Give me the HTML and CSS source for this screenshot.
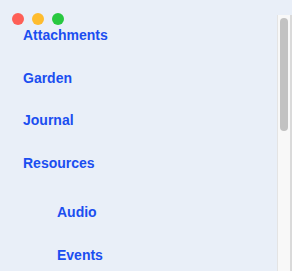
FILE: index.html
```html
<!DOCTYPE html>
<html>
<head>
<meta charset="utf-8">
<link rel="stylesheet" href="styles.css">
</head>
<body>
<div class="window">
  <div class="lights">
    <span class="light red"></span>
    <span class="light yellow"></span>
    <span class="light green"></span>
  </div>
  <div class="pane">
    <nav class="sidebar">
      <ul class="tree">
        <li><a class="item">Attachments</a></li>
        <li><a class="item">Garden</a></li>
        <li><a class="item">Journal</a></li>
        <li><a class="item">Resources</a>
          <ul class="tree sub">
            <li><a class="item">Audio</a></li>
            <li><a class="item">Events</a></li>
          </ul>
        </li>
      </ul>
    </nav>
    <div class="scrollbar">
      <div class="thumb"></div>
    </div>
  </div>
</div>
</body>
</html>
```

FILE: styles.css
```css
html, body {
  margin: 0;
  padding: 0;
  height: 100%;
  overflow: hidden;
}
body {
  background: #e9eff8;
  font-family: "Liberation Sans", Arial, sans-serif;
}
.window {
  position: relative;
  height: 100%;
  display: flex;
  flex-direction: column;
}
.lights {
  position: absolute;
  top: 13px;
  left: 12px;
  display: flex;
  gap: 8px;
  z-index: 2;
}
.light {
  width: 12px;
  height: 12px;
  border-radius: 50%;
  display: block;
}
.red { background: #fe5f57; }
.yellow { background: #febc2e; }
.green { background: #28c840; }
.pane {
  margin-top: 15px;
  flex: 1;
  min-height: 0;
  display: flex;
  border-right: 2px solid #dadada;
}
.sidebar {
  flex: 1;
  min-width: 0;
  overflow: hidden;
}
.scrollbar {
  width: 8px;
  padding: 3px 2px 0 2px;
  background: #f8f8f8;
  border-left: 1px solid #e4e4e4;
}
.thumb {
  height: 113px;
  border-radius: 4px;
  background: #c2c2c2;
}
.tree {
  list-style: none;
  margin: 0;
  padding: 0;
}
.tree.sub {
  margin-top: 6.3px;
  padding-left: 34px;
}
.item {
  display: block;
  padding: 12px 0 14.67px 23px;
  line-height: 16px;
  font-size: 14px;
  font-weight: bold;
  color: #1b4ef0;
  cursor: pointer;
}
```
